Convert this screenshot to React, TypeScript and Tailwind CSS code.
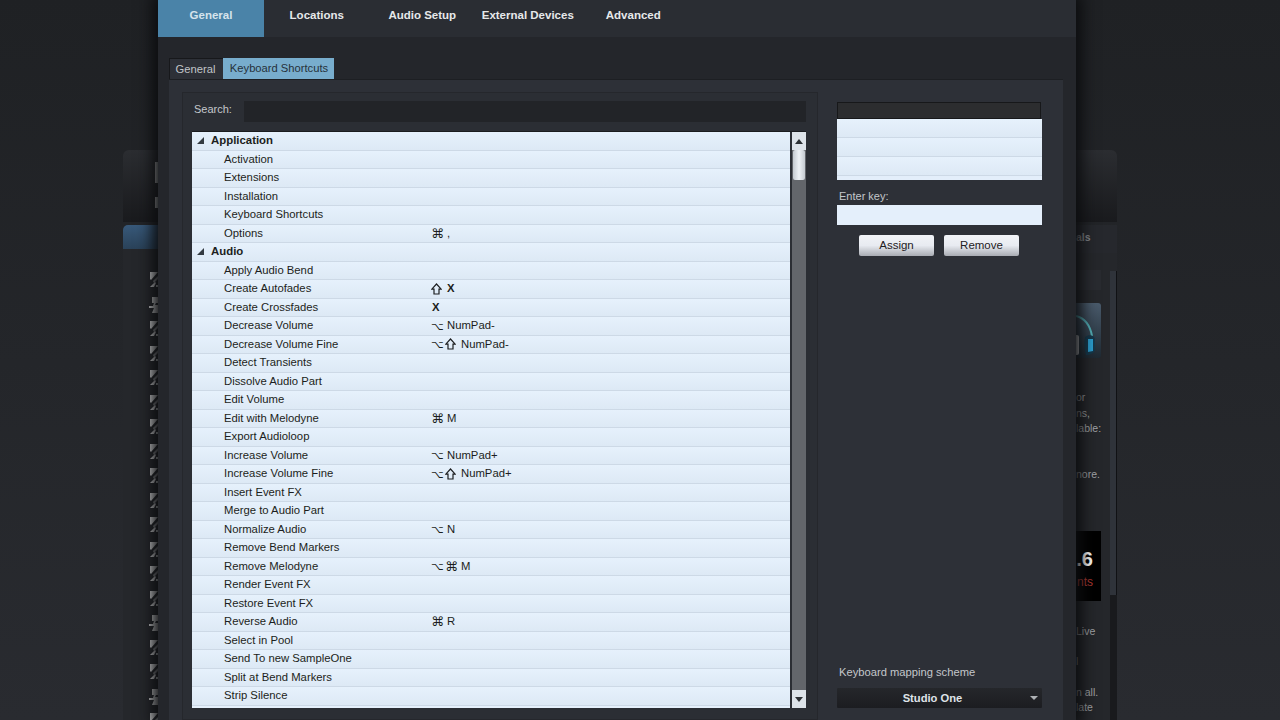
const font = { fontFamily: '"Liberation Sans", "DejaVu Sans", sans-serif' };

type Row = { label: string; keys?: string; section?: boolean };

const rows: Row[] = [
  { label: "Application", section: true },
  { label: "Activation" },
  { label: "Extensions" },
  { label: "Installation" },
  { label: "Keyboard Shortcuts" },
  { label: "Options", keys: "⌘ ," },
  { label: "Audio", section: true },
  { label: "Apply Audio Bend" },
  { label: "Create Autofades", keys: "⇧ X" },
  { label: "Create Crossfades", keys: "X" },
  { label: "Decrease Volume", keys: "⌥ NumPad-" },
  { label: "Decrease Volume Fine", keys: "⌥ ⇧ NumPad-" },
  { label: "Detect Transients" },
  { label: "Dissolve Audio Part" },
  { label: "Edit Volume" },
  { label: "Edit with Melodyne", keys: "⌘ M" },
  { label: "Export Audioloop" },
  { label: "Increase Volume", keys: "⌥ NumPad+" },
  { label: "Increase Volume Fine", keys: "⌥ ⇧ NumPad+" },
  { label: "Insert Event FX" },
  { label: "Merge to Audio Part" },
  { label: "Normalize Audio", keys: "⌥ N" },
  { label: "Remove Bend Markers" },
  { label: "Remove Melodyne", keys: "⌥ ⌘ M" },
  { label: "Render Event FX" },
  { label: "Restore Event FX" },
  { label: "Reverse Audio", keys: "⌘ R" },
  { label: "Select in Pool" },
  { label: "Send To new SampleOne" },
  { label: "Split at Bend Markers" },
  { label: "Strip Silence" },
];

const topTabs = ["General", "Locations", "Audio Setup", "External Devices", "Advanced"];

// which of the track icons behind the dialog use the second shape
const stripIcons = [0, 1, 0, 0, 0, 0, 0, 0, 0, 0, 0, 0, 0, 0, 1, 0, 0, 1, 0];

function StripIcon({ kind }: { kind: number }) {
  if (kind === 1) {
    return (
      <svg className="shrink-0" width="10" height="16" viewBox="0 0 10 16" fill="#c9cacb">
        <path d="M4 0h6v6H8L7 8h3v8H4l2-5H1V9h4l1-3H4z" />
      </svg>
    );
  }
  return (
    <svg className="shrink-0" width="9" height="16" viewBox="0 0 9 16" fill="#cfd0d1">
      <path d="M1 0h8L2 8 1 7z" />
      <path d="M9 4v3l-4 4-1-2z" opacity="0.6" />
      <path d="M1 15l5-5 1 1-2 4z" />
      <path d="M7 13h2v2H7z" />
    </svg>
  );
}

function HeadphoneTile() {
  return (
    <div className="mt-[13px] h-[55px] w-[25px] rounded-r-[3px] bg-gradient-to-b from-[#4a5b6c] to-[#1f2a33]">
      <svg width="25" height="55" viewBox="0 0 25 55" fill="none">
        <path d="M0 13c8 2 14 9 16 20" stroke="#54b0b8" strokeWidth="2" />
        <rect x="-3" y="32" width="6" height="20" rx="2" fill="#c9cdd0" />
        <path d="M9 34c4-3 9-2 10 2v10c0 4-5 6-9 6-2-6-2-12-1-18z" fill="#16384a" />
        <path d="M12 36h5v12l-5 1z" fill="#2c9fd0" />
      </svg>
    </div>
  );
}

function Background() {
  return (
    <div className="flex h-full pl-[123px] pt-[150px]">
      {/* left edge of the window behind the dialog */}
      <div className="flex w-[35px] flex-col">
        <div className="flex h-[72px] shrink-0 flex-col items-end gap-[14px] rounded-tl-[6px] bg-gradient-to-b from-[#2b2d31] to-[#191a1d] pt-[12px]">
          <div className="h-[21px] w-[3px] bg-[#b9babb]" />
          <div className="h-[11px] w-[3px] bg-[#b9babb]" />
        </div>
        <div className="mt-[3px] h-[24px] shrink-0 rounded-tl-[5px] bg-gradient-to-b from-[#38597a] to-[#2a4259]" />
        <div className="flex min-h-0 flex-1 flex-col items-end gap-[8.5px] overflow-hidden bg-[#25272b] pt-[23px]">
          {stripIcons.map((kind, i) => (
            <StripIcon key={i} kind={kind} />
          ))}
        </div>
      </div>

      <div className="w-[918px]" />

      {/* right edge of the window behind the dialog */}
      <div className="flex w-[41px] flex-col" style={font}>
        <div className="h-[72px] shrink-0 rounded-tr-[6px] bg-gradient-to-b from-[#2b2d31] to-[#191a1d]" />
        <div className="mt-[3px] h-[28px] shrink-0 bg-[#26282d] text-[10.5px] font-bold leading-[25px] text-[#85888d]">
          als
        </div>
        <div className="flex min-h-0 flex-1 overflow-hidden bg-[#25272b]">
          <div className="w-[34px] text-[#a2a5a9]">
            <div className="h-[17px]" />
            <div className="mr-[9px] h-[20px] bg-[#292b30]" />
            <HeadphoneTile />
            <div className="mt-[32px] text-[10.5px] leading-[15.5px]">
              <div>or</div>
              <div>ns,</div>
              <div>lable:</div>
              <div className="mt-[30px]">nore.</div>
            </div>
            <div className="mt-[49px] flex h-[70px] w-[25px] flex-col items-end bg-black pr-[8px] pt-[18px]">
              <span className="text-[20px] font-bold leading-[20px] text-white">.6</span>
              <span className="mt-[6px] text-[12px] leading-[14px] text-[#b03a34]">nts</span>
            </div>
            <div className="mt-[23px] text-[10.5px]">Live</div>
            <div className="mt-[14px] text-[10.5px]">l</div>
            <div className="mt-[15px] text-[10.5px] leading-[15px]">
              <div>n all.</div>
              <div>late</div>
            </div>
          </div>
          <div className="flex w-[7px] flex-col pt-[18px]">
            <div className="h-[324px] shrink-0 border-r border-[#101114] bg-[#2f333a]" />
            <div className="flex-1 bg-[#191a1d]" />
          </div>
        </div>
      </div>
    </div>
  );
}

function ShiftIcon() {
  return (
    <svg width="11" height="12" viewBox="0 0 11 12" fill="none" stroke="#1c1e20" strokeWidth="1.2">
      <path d="M5.5 1l4.7 5.2H8V11H3V6.2H.8z" />
    </svg>
  );
}

function Keys({ keys }: { keys: string }) {
  return (
    <span className="flex items-center">
      {keys.split(" ").map((token, i) => {
        if (token === "⇧") {
          return (
            <span key={token} className="flex w-[14px] items-center">
              <ShiftIcon />
            </span>
          );
        }
        if (token === "⌘" || token === "⌥") {
          return (
            <span key={token} className={token === "⌘" ? "w-[14px] text-[13px]" : "w-[14px] text-[11px]"}>
              {token}
            </span>
          );
        }
        return (
          <span key={token} className={`${i > 0 ? "ml-[2px]" : "ml-[1px]"} ${token === "X" ? "font-bold" : ""}`}>
            {token}
          </span>
        );
      })}
    </span>
  );
}

function ShortcutRow({ row }: { row: Row }) {
  return (
    <div className="flex h-[18.5px] shrink-0 items-center border-b border-[#cdd9e6] bg-gradient-to-b from-[#e6f1fc] to-[#dde9f5] text-[11.3px] text-[#1c1e20]">
      {row.section ? (
        <>
          <svg className="ml-[5px] mr-[7px]" width="7" height="7" viewBox="0 0 7 7" fill="#333a40">
            <path d="M7 0v7H0z" />
          </svg>
          <span className="text-[11.4px] font-bold">{row.label}</span>
        </>
      ) : (
        <>
          <span className="w-[239px] pl-[32px]">{row.label}</span>
          {row.keys && <Keys keys={row.keys} />}
        </>
      )}
    </div>
  );
}

function Scrollbar() {
  return (
    <div className="flex w-[14px] flex-col bg-[#63666b]">
      <div className="flex h-[18px] items-center justify-center bg-[#dde3e9]">
        <svg width="8" height="5" viewBox="0 0 8 5" fill="#2c3034">
          <path d="M4 0l4 5H0z" />
        </svg>
      </div>
      <div className="mx-[1px] h-[30px] rounded-[2px] bg-gradient-to-r from-[#c4cad0] via-[#eef2f6] to-[#c4cad0]" />
      <div className="flex-1" />
      <div className="flex h-[18px] items-center justify-center bg-[#dde3e9]">
        <svg width="8" height="5" viewBox="0 0 8 5" fill="#2c3034">
          <path d="M4 5l4-5H0z" />
        </svg>
      </div>
    </div>
  );
}

function KeyButton({ label }: { label: string }) {
  return (
    <button className="h-[21px] w-[75px] rounded-[2px] bg-gradient-to-b from-[#f1f3f7] via-[#e8ebf1] to-[#a9acb3] text-[11.5px] text-[#1e2023]">
      {label}
    </button>
  );
}

function Dialog() {
  return (
    <div
      className="absolute left-[158px] top-0 flex h-[720px] w-[918px] flex-col bg-[#24262b] shadow-[0_0_14px_6px_#0c0d0f]"
      style={font}
    >
      <div className="flex h-[37px] shrink-0 bg-[#2a2d33]">
        {topTabs.map((tab, i) => (
          <div
            key={tab}
            className={
              i === 0
                ? "flex w-[106px] items-center justify-center bg-[#4a83a8] pb-[6px] text-[11.5px] font-bold text-[#d5e3ec]"
                : "flex w-[105.5px] items-center justify-center pb-[6px] text-[11.5px] font-bold text-[#e6e8ea]"
            }
          >
            {tab}
          </div>
        ))}
      </div>

      <div className="ml-[11px] mt-[21px] flex h-[21px] shrink-0 items-stretch text-[11.2px]">
        <div className="flex w-[54px] items-center justify-center border-l border-t border-[#17181b] bg-[#2d3037] pr-[2px] text-[#c2c5c9]">
          General
        </div>
        <div className="flex w-[111px] items-center justify-center bg-[#78adcd] pl-[1px] text-[#26313a]">
          Keyboard Shortcuts
        </div>
      </div>

      <div className="ml-[11px] mr-[13px] flex flex-1 gap-[10px] border-t border-[#1d1f23] bg-[#2d3037] pl-[13px] pr-[11px] pt-[12px]">
        <div className="flex h-[628px] w-[636px] flex-col border border-[#25272c] bg-[#2b2e34] pl-[9px] pr-[11px]">
          <div className="flex h-[38px] shrink-0 items-center pb-[1px]">
            <span className="mb-[5px] w-[52px] pl-[2px] text-[11px] text-[#c4c7cb]">Search:</span>
            <div className="h-[21px] flex-1 bg-[#222428]" />
          </div>
          <div className="flex h-[577px] gap-[2px] border-t border-[#1a1c1f]">
            <div className="flex flex-1 flex-col overflow-hidden bg-[#e6f1fc]">
              {rows.map((row) => (
                <ShortcutRow key={row.label} row={row} />
              ))}
            </div>
            <Scrollbar />
          </div>
        </div>

        <div className="flex h-[616px] w-[224px] flex-col bg-[#2d3037] px-[9px] pt-[10px]">
          <div className="h-[17px] w-[204px] shrink-0 border border-[#17181a] bg-[#2c2d2f]" />
          <div className="flex h-[61px] w-[205px] shrink-0 flex-col bg-[#e3eefa]">
            {[0, 1, 2].map((i) => (
              <div key={i} className="h-[19px] border-b border-[#cdd9e6] bg-gradient-to-b from-[#e6f1fc] to-[#dde9f5]" />
            ))}
          </div>
          <div className="mb-[1px] mt-[8px] pl-[2px] text-[11px] leading-[16px] text-[#c4c7cb]">Enter key:</div>
          <div className="h-[20px] w-[205px] shrink-0 bg-[#e4effb]" />
          <div className="mt-[10px] flex w-[204px] justify-center gap-[10px]">
            <KeyButton label="Assign" />
            <KeyButton label="Remove" />
          </div>
          <div className="flex-1" />
          <div className="pl-[2px] text-[11.2px] leading-[16px] text-[#c4c7cb]">Keyboard mapping scheme</div>
          <div className="relative mt-[8px] flex h-[20px] w-[205px] shrink-0 items-center justify-center rounded-[1px] bg-gradient-to-b from-[#25272b] to-[#1c1d21] pr-[14px] text-[11.2px] font-bold text-[#dfe3e8]">
            Studio One
            <svg className="absolute right-[4px] top-[8px]" width="8" height="4" viewBox="0 0 8 4" fill="#aeb1b5">
              <path d="M0 0h8L4 4z" />
            </svg>
          </div>
        </div>
      </div>
    </div>
  );
}

export default function App() {
  return (
    <div className="relative h-[720px] w-[1280px] overflow-hidden bg-gradient-to-b from-[#1f2124] to-[#292b30]">
      <Background />
      <Dialog />
    </div>
  );
}
